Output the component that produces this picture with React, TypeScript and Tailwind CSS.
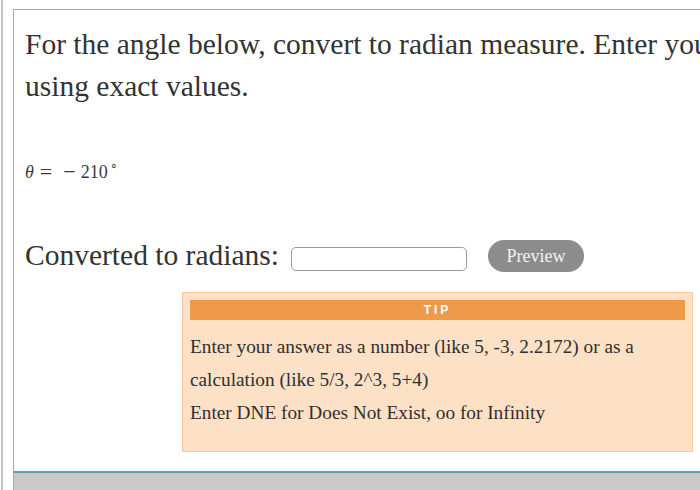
export default function App() {
  const serif = { fontFamily: '"Liberation Serif", "Times New Roman", serif' }

  return (
    <div className="w-[700px] h-[490px] overflow-hidden bg-white flex text-[#333]" style={serif}>
      {/* page edge */}
      <div className="w-[2px] ml-[1px] bg-[#c4c4c4]" />

      <div className="flex-1 ml-[10px] mt-[9px] flex flex-col border-l border-t border-[#a8a8a8] min-w-0">
        <div className="flex-1 pl-[11px] pt-[13px] overflow-hidden">
          <p className="text-[29.5px] leading-[42px] whitespace-nowrap">
            For the angle below, convert to radian measure. Enter your answer
          </p>
          <p className="text-[29.5px] leading-[42px]">using exact values.</p>

          <div className="mt-[53px] h-[24px] text-[18px] leading-[24px] flex items-center text-[#3a3a3a]" style={serif}>
            <span className="italic">θ</span>
            <span className="ml-[6px] text-[22px] leading-none">=</span>
            <span className="ml-[11px] text-[22px] leading-none">−</span>
            <span className="ml-[5px]">210</span>
            <span className="text-[12px] relative -top-[6px] ml-[2px]">∘</span>
          </div>

          <div className="mt-[50px] flex items-center">
            <span className="text-[29.5px] leading-[42px]">Converted to radians:</span>
            <div className="ml-[12px] mt-[8px] w-[176px] h-[24px] rounded-[5px] border border-[#9a9a9a] bg-white" />
            <button className="ml-[21px] mt-[2px] w-[96px] h-[32px] rounded-full bg-[#8c8c8c] text-[#f2f2f2] text-[18px]" style={serif}>
              Preview
            </button>
          </div>

          <div className="ml-[157px] mt-[16px] w-[511px] h-[160px] bg-[#fde1c6] border border-[#f0c9a2] px-[7px] pt-[7px]">
            <div
              className="h-[20px] bg-[#ee9a4b] text-white text-[12px] font-bold tracking-[3px] flex items-center justify-center"
              style={{ fontFamily: '"Liberation Sans", Arial, sans-serif' }}
            >
              TIP
            </div>
            <div className="mt-[10px] text-[19.3px] leading-[33px] text-[#2f2f2f]">
              <p>Enter your answer as a number (like 5, -3, 2.2172) or as a</p>
              <p>calculation (like 5/3, 2^3, 5+4)</p>
              <p>Enter DNE for Does Not Exist, oo for Infinity</p>
            </div>
          </div>
        </div>

        <div className="h-[19px] border-t-2 border-[#5e9da0] bg-[#c9c9c9]" />
      </div>
    </div>
  )
}
